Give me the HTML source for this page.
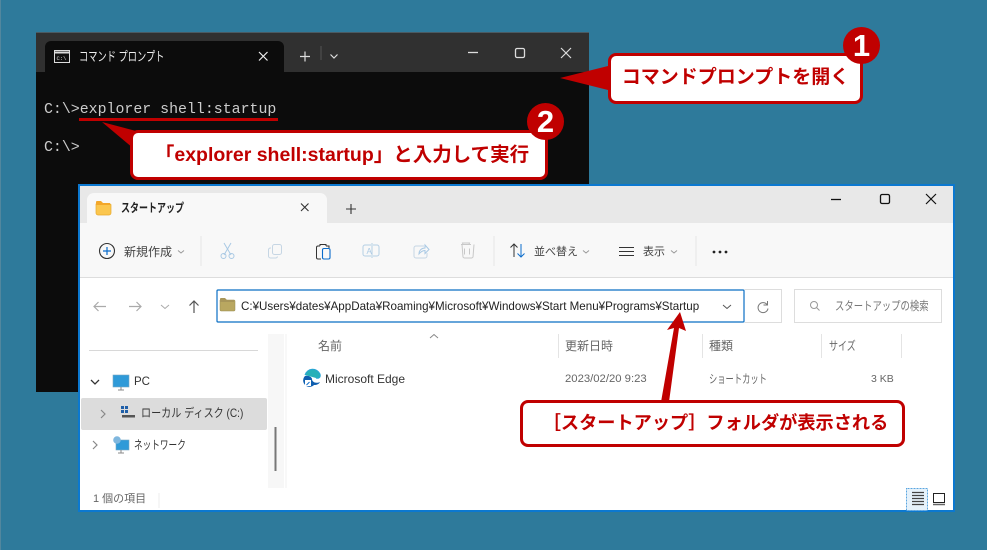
<!DOCTYPE html>
<html lang="ja"><head><meta charset="utf-8"><style>
html,body{margin:0;padding:0;background:#2e7a9b}
#r{position:relative;width:987px;height:550px;overflow:hidden;background:#2e7a9b;font-family:"Liberation Sans","Noto Sans CJK JP",sans-serif}
#r div{position:absolute;white-space:nowrap}
.b{position:absolute}
.j{font-size:11px;color:#333;line-height:14px}
.g{color:#666}
.k{transform-origin:0 50%;transform:scaleX(.75);font-size:12px}
.m{font-family:"Liberation Mono",monospace;font-size:14.9px;color:#ccc;line-height:18px}
.c{font-weight:bold;color:#c00000;background:#fff;border:3px solid #c00000;border-radius:8px;box-sizing:border-box;text-align:center}
</style></head><body><div id="r">
<div style="left:0;top:0;width:1px;height:550px;background:#8a9aa2;opacity:.4"></div>
<div class="b" style="left:36px;top:32px;width:553px;height:360px;background:#0c0c0c"></div>
<div class="b" style="left:36px;top:32px;width:553px;height:40px;background:#303030;border-top:1px solid #4a5a62;box-sizing:border-box"></div>
<div class="b" style="left:45px;top:41px;width:239px;height:31px;background:#0c0c0c;border-radius:6px 6px 0 0"></div>
<svg class="b" style="left:0;top:0;position:absolute" width="987" height="550" fill="none">
<g stroke="#ddd" stroke-width="1"><rect x="54.500" y="50.500" width="15" height="12" fill="#111"/><path d="M55 52.500h14" stroke-width="2"/></g>
<text x="56.500" y="60" font-size="5.500" fill="#ddd" font-family="Liberation Mono">C:\</text>
<path d="M259 52l8.500 8.500M267.500 52L259 60.500" stroke="#eee" stroke-width="1.200"/>
<path d="M300 56.500h10M305 51.500v10" stroke="#ddd" stroke-width="1.200"/>
<path d="M321 46v14" stroke="#555"/>
<path d="M330.500 54.500l3.500 3.500 3.500-3.500" stroke="#ddd" stroke-width="1.200"/>
<path d="M468 52.500h10" stroke="#ddd" stroke-width="1.300"/>
<rect x="515.500" y="48.500" width="9" height="9" rx="1.500" stroke="#ddd" stroke-width="1.300"/>
<path d="M561 48l10 10M571 48l-10 10" stroke="#ddd" stroke-width="1.200"/>
</svg>
<div class="j k" style="left:79px;top:50px;color:#eee;font-size:13px;transform:scaleX(.71)">コマンド プロンプト</div>
<div class="m" style="left:44px;top:101px">C:\&gt;explorer shell:startup</div>
<div class="m" style="left:44px;top:139px">C:\&gt;</div>
<div class="b" style="left:79px;top:118px;width:199px;height:3px;background:#c00000"></div>

<div class="b" style="left:78px;top:184px;width:877px;height:328px;background:#fff;border:2px solid #0b78d0;box-sizing:border-box"></div>
<div class="b" style="left:80px;top:186px;width:873px;height:37px;background:#e8e8e8"></div>
<div class="b" style="left:80px;top:223px;width:873px;height:55px;background:#f8f8f8;border-bottom:1px solid #ddd;box-sizing:border-box"></div>
<div class="b" style="left:87px;top:193px;width:240px;height:30px;background:#f8f8f8;border-radius:7px 7px 0 0"></div>
<div class="j k" style="left:121px;top:201px;font-weight:bold;color:#222">スタートアップ</div>
<div class="j" style="left:124px;top:245px;color:#444;font-size:12px">新規作成</div>
<div class="j" style="left:534px;top:245px;color:#444">並べ替え</div>
<div class="j" style="left:643px;top:245px;color:#444">表示</div>
<svg class="b" style="left:0;top:0;position:absolute" width="987" height="550" fill="none">
<path d="M96 204h14a1 1 0 0 1 1 1v8a2 2 0 0 1-2 2H98a2 2 0 0 1-2-2z" fill="#fbc64e" stroke="#e8a92c" stroke-width=".7"/><path d="M96 205v-3a1 1 0 0 1 1-1h4l2 2h7v2H96z" fill="#f3a72a"/>
<path d="M301 203.500l7.500 7.500M308.500 203.500l-7.500 7.500" stroke="#333" stroke-width="1.100"/>
<path d="M346 209h10M351 204v10" stroke="#333" stroke-width="1.100"/>
<path d="M831 199.500h10" stroke="#111" stroke-width="1.300"/>
<rect x="880.500" y="194.500" width="9" height="9" rx="1.500" stroke="#111" stroke-width="1.300"/>
<path d="M926 194l10 10M936 194l-10 10" stroke="#111" stroke-width="1.200"/>
<circle cx="107" cy="251" r="7.500" stroke="#333" stroke-width="1.100"/><path d="M103 251h8M107 247v8" stroke="#0a6ccb" stroke-width="1.200"/>
<path d="M178 250.500l3 2.500 3-2.500" stroke="#999"/>
<path d="M201 236v30M494 236v30M696 236v30" stroke="#e6e6e6"/>
<g stroke="#a9c9e4" stroke-width="1"><path d="M224 243l7 12M231 243l-7 12"/><circle cx="223.500" cy="256" r="2.500"/><circle cx="231.500" cy="256" r="2.500"/></g>
<g stroke="#c6d6e4"><rect x="272.500" y="244.500" width="9" height="10" rx="2"/><path d="M271 248h-1a2 2 0 0 0-1.500 2v6a2 2 0 0 0 2 2h5a2 2 0 0 0 2-1.500"/></g>
<g stroke="#333"><path d="M320 246h-2a1.500 1.500 0 0 0-1.500 1.500v10a1.500 1.500 0 0 0 1.500 1.500h3M326 246h3v2M320 246v-1.500h6V246"/></g><rect x="322.500" y="248.500" width="7.500" height="10.500" rx="1.500" stroke="#0a6ccb" stroke-width="1.100"/>
<g stroke="#c6d2dc"><path d="M371 245h-6a2 2 0 0 0-2 2v7a2 2 0 0 0 2 2h6M373 245h4a2 2 0 0 1 2 2v7a2 2 0 0 1-2 2h-4M372 243v15" stroke="#b5cfe5"/></g><text x="366.500" y="254" font-size="8" fill="#a9c9e4">A</text>
<path d="M424 246h-8a2 2 0 0 0-2 2v8a2 2 0 0 0 2 2h9a2 2 0 0 0 2-2v-3" stroke="#c6d6e4"/><path d="M419 254c0-4 3-6 6-6v-3l4 4.500-4 4v-3c-2 0-4 1-6 3.500z" stroke="#a9c9e4"/>
<path d="M462 245h10M464 245l-.5-1.500h7L470 245M463 245l1 12.500a1.500 1.500 0 0 0 1.500 1h7a1.500 1.500 0 0 0 1.500-1l1-12.500M465.500 249v6M470.500 249v6" stroke="#c8c8c8" transform="translate(-1 -.5)"/>
<path d="M514 257v-13M510.500 247.500l3.500-3.500 3.500 3.500" stroke="#333"/><path d="M521 244v13M517.500 253.500l3.500 3.500 3.500-3.500" stroke="#0a6ccb"/>
<path d="M583 250.500l3 2.500 3-2.500M671 250.500l3 2.500 3-2.500" stroke="#999"/>
<path d="M619 247.500h15M619 251.500h15M619 255.500h15" stroke="#333"/>
<g fill="#222"><circle cx="714" cy="252" r="1.400"/><circle cx="720" cy="252" r="1.400"/><circle cx="726" cy="252" r="1.400"/></g>
<path d="M106 306.500H94M98.500 302l-4.500 4.500 4.500 4.500" stroke="#aaa" stroke-width="1.200"/>
<path d="M129 306.500h12M136.500 302l4.500 4.500-4.500 4.500" stroke="#aaa" stroke-width="1.200"/>
<path d="M161 305l4 3.500 4-3.500" stroke="#aaa"/>
<path d="M194 313V301M189.500 305.500l4.500-4.500 4.500 4.500" stroke="#555" stroke-width="1.200"/>
<path d="M744.500 289.500h37v33h-37" stroke="#ddd"/>
<rect x="217" y="290" width="527" height="32" fill="#fff" stroke="#0b6fc4" stroke-width="1.200" rx="1"/>
<path d="M220 300h14a1 1 0 0 1 1 1v9a1 1 0 0 1-1 1h-13a1 1 0 0 1-1-1z" fill="#b9a760" stroke="#97894f" stroke-width=".5"/><path d="M220 302v-3a1 1 0 0 1 1-1h4l2 2h7v2z" fill="#a8965a"/>
<path d="M723 305l4 3.500 4-3.500" stroke="#555"/>
<path d="M767 304.500a5 5 0 1 0 1 4M767.500 301v4h-4" stroke="#777"/>
<rect x="794.500" y="289.500" width="147" height="33" stroke="#ddd"/>
<circle cx="814" cy="305" r="3.500" stroke="#999"/><path d="M816.500 307.500l3 3" stroke="#999"/>
<path d="M89 350.500h169" stroke="#d8d8d8"/>
<rect x="268" y="334" width="16" height="154" fill="#f7f7f7"/><path d="M286 334v154" stroke="#f2f2f2"/>
<rect x="274.500" y="427" width="2" height="44" fill="#777"/>
<path d="M91 380l4 4 4-4" stroke="#333" stroke-width="1.300"/>
<rect x="81" y="398" width="186" height="32" rx="2" fill="#dcdcdc"/>
<path d="M101 410l4 4-4 4M93 441l4 4-4 4" stroke="#888" stroke-width="1.200"/>
<rect x="113" y="375" width="16" height="12" fill="#2f9ad8" stroke="#7aa9c4" stroke-width=".6"/><path d="M118 390h6M121 387v3" stroke="#888"/>
<g fill="#1f5fa8"><rect x="121" y="406" width="3" height="3"/><rect x="125" y="406" width="3" height="3"/><rect x="121" y="410" width="3" height="3"/><rect x="125" y="410" width="3" height="3"/></g><rect x="122" y="415" width="13" height="2.500" fill="#555"/>
<rect x="116" y="440" width="13" height="10" fill="#2f9ad8" stroke="#7aa9c4" stroke-width=".6"/><circle cx="117" cy="440" r="3.800" fill="#7fb7de"/><path d="M118 453h6M121 450v3" stroke="#888"/>
<path d="M430 338l4-3.500 4 3.500" stroke="#888"/>
<path d="M558.500 334v24M702.500 334v24M821.500 334v24M901.500 334v24" stroke="#e4e4e4"/>
<path d="M305 375a8 8 0 0 1 15-1c1 3-1 5-4 4" fill="#27b0b8" stroke="#2aa5d5" stroke-width="1"/><path d="M305 376a6 6 0 0 0 9 9c3 0 5-1 6-3-4 2-8 0-8-3 0-2-4-4-7-3z" fill="#0f5fb0"/><rect x="305" y="380" width="6" height="6" fill="#fff"/><path d="M306.500 385l3-3" stroke="#0a6ccb"/>
<path d="M159 493v15" stroke="#eee"/>
<rect x="906.500" y="488.500" width="21" height="22" fill="#e6f2fb" stroke="#5aa5e0" stroke-dasharray="1 .5"/>
<path d="M912 492.500h12M912 495.500h12M912 498.500h12M912 501.500h12M912 504.500h12" stroke="#444" stroke-width="1.300"/>
<rect x="933.500" y="493.500" width="11" height="9" stroke="#222"/><path d="M933 504.500h12" stroke="#666" stroke-width="1.500"/>
</svg>
<div class="j" style="left:241px;top:300px;color:#222;font-size:11.600px">C:¥Users¥dates¥AppData¥Roaming¥Microsoft¥Windows¥Start Menu¥Programs¥Startup</div>
<div class="j g k" style="left:835px;top:299px;color:#777;transform:scaleX(.78)">スタートアップの検索</div>
<div class="j" style="left:134px;top:375px;font-size:11.500px">PC</div>
<div class="j k" style="left:141px;top:406px;transform:scaleX(.84)">ローカル ディスク (C:)</div>
<div class="j k" style="left:134px;top:438px;transform:scaleX(.72)">ネットワーク</div>
<div class="j g" style="left:93px;top:492px">1 個の項目</div>
<div class="j g" style="left:318px;top:339px;font-size:12px">名前</div>
<div class="j g" style="left:565px;top:339px;font-size:12px">更新日時</div>
<div class="j g" style="left:709px;top:339px;font-size:12px">種類</div>
<div class="j g k" style="left:829px;top:339px">サイズ</div>
<div class="j" style="left:325px;top:372px;font-size:12px">Microsoft Edge</div>
<div class="j g" style="left:565px;top:372px;font-size:11.300px">2023/02/20 9:23</div>
<div class="j g k" style="left:709px;top:372px;transform:scaleX(.69)">ショートカット</div>
<div class="j g" style="left:871px;top:372px;font-size:10.500px">3 KB</div>

<svg class="b" style="left:0;top:0;position:absolute" width="987" height="550">
<polygon points="560,78 612,65 612,91" fill="#c00000"/>
<polygon points="102,122 140,132 140,154" fill="#c00000"/>
<path d="M680 312 L686 331 L679 328 L669 402 L661 402 L674 328 L667 330 Z" fill="#c00000"/>
</svg>
<div class="c" style="left:608px;top:53px;width:255px;height:51px;line-height:44px;font-size:19px">コマンドプロンプトを開く</div>
<div class="c" style="left:130px;top:130px;width:418px;height:50px;line-height:44px;font-size:19.500px;padding-left:6px">「explorer shell:startup」と入力して実行</div>
<div class="c" style="left:520px;top:400px;width:385px;height:47px;line-height:41px;font-size:18.200px;padding-left:6px">［スタートアップ］フォルダが表示される</div>
<div class="b" style="left:843px;top:27px;width:37px;height:37px;border-radius:50%;background:#c00000;color:#fff;text-align:center;font-weight:bold;font-size:31px;line-height:37px">1</div>
<div class="b" style="left:527px;top:103px;width:37px;height:37px;border-radius:50%;background:#c00000;color:#fff;text-align:center;font-weight:bold;font-size:31px;line-height:37px">2</div>
</div></body></html>
